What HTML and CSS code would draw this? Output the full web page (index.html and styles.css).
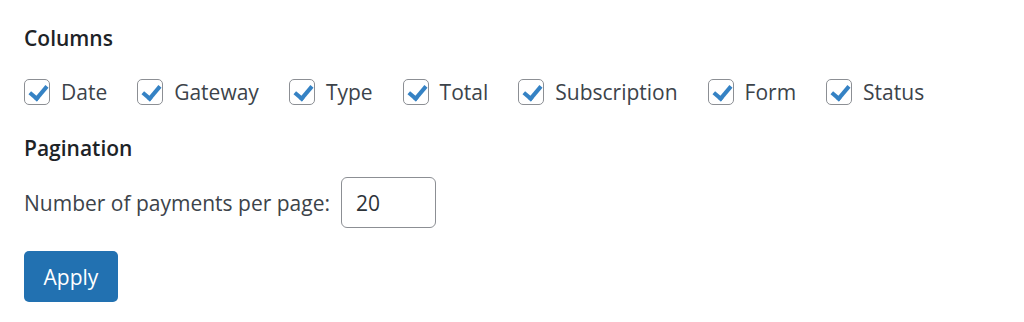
FILE: index.html
```html
<!DOCTYPE html>
<html lang="en">
<head>
  <meta charset="UTF-8">
  <title>Screen Options</title>
  <link rel="stylesheet" href="styles.css">
</head>
<body>
  <form class="screen-options">
    <fieldset class="columns-prefs">
      <legend>Columns</legend>
      <div class="check-row">
        <label class="check"><input type="checkbox" checked><span class="box"></span>Date</label>
        <label class="check"><input type="checkbox" checked><span class="box"></span>Gateway</label>
        <label class="check"><input type="checkbox" checked><span class="box"></span>Type</label>
        <label class="check"><input type="checkbox" checked><span class="box"></span>Total</label>
        <label class="check"><input type="checkbox" checked><span class="box"></span>Subscription</label>
        <label class="check"><input type="checkbox" checked><span class="box"></span>Form</label>
        <label class="check"><input type="checkbox" checked><span class="box"></span>Status</label>
      </div>
    </fieldset>

    <fieldset class="pagination-prefs">
      <legend>Pagination</legend>
      <label class="per-page">Number of payments per page:
        <input type="number" value="20" class="per-page-input">
      </label>
    </fieldset>

    <button type="button" class="apply-btn">Apply</button>
  </form>
</body>
</html>
```

FILE: styles.css
```css
* {
  margin: 0;
  padding: 0;
  box-sizing: border-box;
}

body {
  font-family: 'Open Sans', 'Noto Sans', sans-serif;
  font-size: 21px;
  color: #3c434a;
  background: #fff;
  width: 1024px;
  height: 322px;
  overflow: hidden;
}

.screen-options {
  padding: 25px 24px 0;
}

fieldset {
  border: none;
}

legend {
  font-weight: 600;
  color: #1d2327;
  font-size: 21px;
  line-height: 26px;
}

.columns-prefs {
  margin-bottom: 30px;
}

.check-row {
  display: flex;
  margin-top: 28px;
  gap: 30px;
}

.check {
  display: flex;
  align-items: center;
  gap: 11px;
  line-height: 26px;
}

.check input {
  display: none;
}

.box {
  width: 26px;
  height: 26px;
  border: 1.5px solid #8c8f94;
  border-radius: 5px;
  position: relative;
}

.box::after {
  content: '';
  position: absolute;
  left: 8px;
  top: 2px;
  width: 7px;
  height: 14px;
  border: solid #3582c4;
  border-width: 0 4px 4px 0;
  transform: rotate(40deg);
}

.per-page {
  display: flex;
  align-items: center;
  gap: 11px;
  margin-top: 16px;
}

.per-page-input {
  width: 95px;
  height: 51px;
  border: 1.5px solid #8c8f94;
  border-radius: 6px;
  font: inherit;
  color: #2c3338;
  padding: 0 14px;
  -moz-appearance: textfield;
}

.per-page-input::-webkit-inner-spin-button,
.per-page-input::-webkit-outer-spin-button {
  -webkit-appearance: none;
}

.apply-btn {
  margin-top: 23px;
  width: 94px;
  height: 51px;
  background: #2271b1;
  color: #fff;
  border: none;
  border-radius: 5px;
  font: inherit;
  font-size: 21px;
}
```
